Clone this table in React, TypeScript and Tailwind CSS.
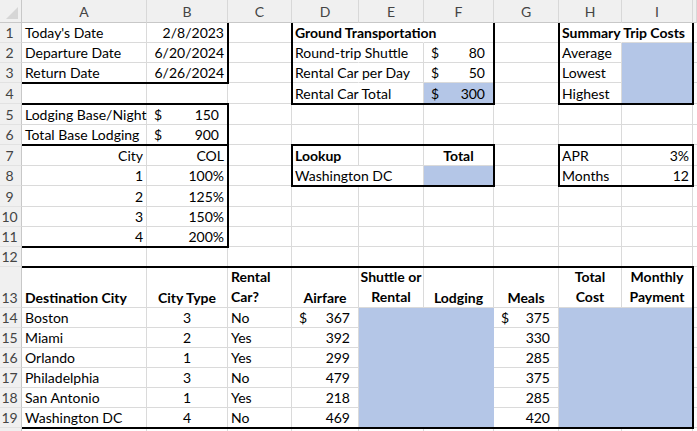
import React from "react";

type Cell = {
  t?: string;
  al?: "l" | "r" | "c";
  b?: boolean;
  fill?: boolean;
  acct?: boolean; // accounting alignment
  d?: boolean; // show the $ sign
  nr?: boolean; // text spills over, hide right gridline
};

const E: Cell = {};
const F: Cell = { fill: true };
const L = (t: string, x: Partial<Cell> = {}): Cell => ({ t, ...x });
const R = (t: string): Cell => ({ t, al: "r" });
const C = (t: string): Cell => ({ t, al: "c" });
const H = (t: string, al: "l" | "c" = "c"): Cell => ({ t, al, b: true });
const $ = (t: string, fill = false): Cell => ({ t, acct: true, d: true, fill });
const N = (t: string): Cell => ({ t, acct: true });

const rows: Cell[][] = [
  [L("Today's Date"), R("2/8/2023"), E, L("Ground Transportation", { b: true, nr: true }), { nr: true }, E, E, L("Summary Trip Costs", { b: true, nr: true }), E],
  [L("Departure Date"), R("6/20/2024"), E, L("Round-trip Shuttle", { nr: true }), E, $("80"), E, L("Average"), F],
  [L("Return Date"), R("6/26/2024"), E, L("Rental Car per Day", { nr: true }), E, $("50"), E, L("Lowest"), F],
  [E, E, E, L("Rental Car Total", { nr: true }), E, $("300", true), E, L("Highest"), F],
  [L("Lodging Base/Night"), $("150"), E, E, E, E, E, E, E],
  [L("Total Base Lodging"), $("900"), E, E, E, E, E, E, E],
  [R("City"), R("COL"), E, H("Lookup", "l"), E, H("Total"), E, L("APR"), R("3%")],
  [R("1"), R("100%"), E, L("Washington DC", { nr: true }), E, F, E, L("Months"), R("12")],
  [R("2"), R("125%"), E, E, E, E, E, E, E],
  [R("3"), R("150%"), E, E, E, E, E, E, E],
  [R("4"), R("200%"), E, E, E, E, E, E, E],
  [E, E, E, E, E, E, E, E, E],
  [H("Destination City", "l"), H("City Type"), H("Rental\nCar?", "l"), H("Airfare"), H("Shuttle or\nRental"), H("Lodging"), H("Meals"), H("Total\nCost"), H("Monthly\nPayment")],
  [L("Boston"), C("3"), L("No"), $("367"), F, F, $("375"), F, F],
  [L("Miami"), C("2"), L("Yes"), N("392"), F, F, N("330"), F, F],
  [L("Orlando"), C("1"), L("Yes"), N("299"), F, F, N("285"), F, F],
  [L("Philadelphia"), C("3"), L("No"), N("479"), F, F, N("375"), F, F],
  [L("San Antonio"), C("1"), L("Yes"), N("218"), F, F, N("285"), F, F],
  [L("Washington DC"), C("4"), L("No"), N("469"), F, F, N("420"), F, F],
  [E, E, E, E, E, E, E, E, E],
];

const letters = ["A", "B", "C", "D", "E", "F", "G", "H", "I", ""];

function SheetCell({ c, row, col }: { c: Cell; row: number; col: number }) {
  const lines = (c.t ?? "").split("\n");
  const justify = c.al === "r" ? "justify-end" : c.al === "c" ? "justify-center" : "justify-start";
  return (
    <div
      style={{ gridRow: row, gridColumn: col }}
      className={[
        "flex items-end border-b border-r whitespace-nowrap leading-[18px] text-black",
        c.fill ? "bg-[#b4c6e7] border-[#b4c6e7]" : "border-[#dadada]",
        c.nr ? "border-r-transparent" : "",
        c.b ? "font-bold" : "",
        c.acct ? "justify-between pl-[7px] pr-[8px]" : `${justify} px-[3px]`,
      ].join(" ")}
    >
      {c.acct ? (
        <>
          <span>{c.d ? "$" : ""}</span>
          <span>{c.t}</span>
        </>
      ) : lines.length > 1 ? (
        <div className={c.al === "c" ? "text-center leading-[20px]" : "leading-[20px]"}>
          {lines.map((l) => (
            <div key={l}>{l}</div>
          ))}
        </div>
      ) : (
        <span>{c.t}</span>
      )}
    </div>
  );
}

export default function App() {
  return (
    <div className="w-[697px] h-[431px] overflow-hidden bg-white font-[Lato,sans-serif] text-[14px]">
      <div className="grid grid-cols-[22px_125px_81px_64px_67px_65px_70px_65px_63px_71px_1fr] grid-rows-[23px_20px_20px_20px_21px_21px_20px_21px_20px_21px_20px_20px_20px_41px_20px_20px_20px_20px_20px_20px_20px]">
        {/* corner */}
        <div className="row-start-1 col-start-1 bg-[#f0f0f0] border-r border-b border-[#c8c8c8] flex items-end justify-end p-[3px]">
          <svg width="12" height="12" viewBox="0 0 12 12">
            <path d="M12 0 L12 12 L0 12 Z" fill="#d6d6d6" />
          </svg>
        </div>

        {/* column headers */}
        {letters.map((l, i) => (
          <div
            key={"h" + i}
            style={{ gridRow: 1, gridColumn: i + 2 }}
            className="bg-[#f0f0f0] border-r border-b border-r-[#d8d8d8] border-b-[#c8c8c8] flex items-center justify-center text-[#444]"
          >
            {l}
          </div>
        ))}

        {/* row headers + cells */}
        {rows.map((r, ri) => (
          <React.Fragment key={ri}>
            <div
              style={{ gridRow: ri + 2, gridColumn: 1 }}
              className="bg-[#f0f0f0] border-r border-b border-r-[#c8c8c8] border-b-[#e2e2e2] flex items-end justify-center pr-[2px] leading-[18px] text-[#444]"
            >
              {ri < 19 ? ri + 1 : ""}
            </div>
            {r.map((c, ci) => (
              <SheetCell key={ci} c={c} row={ri + 2} col={ci + 2} />
            ))}
            <div style={{ gridRow: ri + 2, gridColumn: 11 }} className="border-b border-[#dadada]" />
          </React.Fragment>
        ))}

        {/* thick outlines of the cell ranges */}
        <div className="col-start-2 col-end-4 row-start-2 row-end-5 -mr-px -mb-px border-r-2 border-b-2 border-black z-10 pointer-events-none" />
        <div className="col-start-5 col-end-8 row-start-2 row-end-6 -ml-px -mr-px -mb-px border-x-2 border-b-2 border-black z-10 pointer-events-none" />
        <div className="col-start-9 col-end-11 row-start-2 row-end-6 -ml-px -mr-px -mb-px border-x-2 border-b-2 border-black z-10 pointer-events-none" />
        <div className="col-start-2 col-end-4 row-start-6 row-end-8 -mt-px -mr-px -mb-px border-t-2 border-r-2 border-b-2 border-black z-10 pointer-events-none" />
        <div className="col-start-2 col-end-4 row-start-8 row-end-13 -mr-px -mb-px border-r-2 border-b-2 border-black z-10 pointer-events-none" />
        <div className="col-start-5 col-end-8 row-start-8 row-end-10 -m-px border-2 border-black z-10 pointer-events-none" />
        <div className="col-start-9 col-end-11 row-start-8 row-end-10 -m-px border-2 border-black z-10 pointer-events-none" />
        <div className="col-start-2 col-end-11 row-start-14 row-end-21 -mt-px -mr-px -mb-px border-t-2 border-r-2 border-b-2 border-black z-10 pointer-events-none" />
      </div>
    </div>
  );
}
